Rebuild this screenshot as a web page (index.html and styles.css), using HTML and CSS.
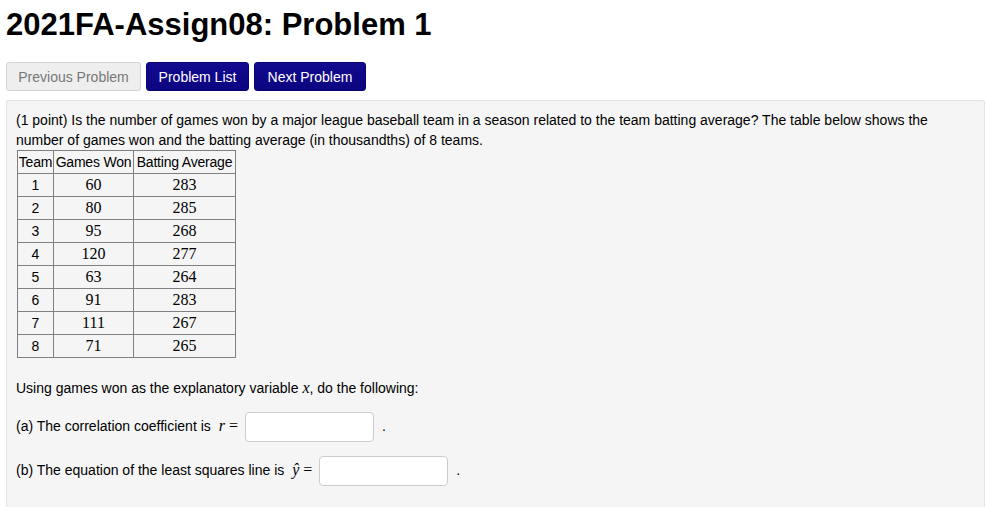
FILE: index.html
```html
<!DOCTYPE html>
<html>
<head>
<meta charset="utf-8">
<link rel="stylesheet" href="styles.css">
</head>
<body>
<h1 class="title">2021FA-Assign08: Problem 1</h1>
<div class="nav">
  <span class="btn btn-disabled">Previous Problem</span>
  <span class="btn btn-primary">Problem List</span>
  <span class="btn btn-primary">Next Problem</span>
</div>
<div class="problem">
  <p class="intro">(1 point) Is the number of games won by a major league baseball team in a season related to the team batting average? The table below shows the number of games won and the batting average (in thousandths) of 8 teams.</p>
  <table class="data">
    <tr class="head"><th class="c-team">Team</th><th class="c-won">Games Won</th><th class="c-avg">Batting Average</th></tr>
    <tr><td class="team">1</td><td>60</td><td>283</td></tr>
    <tr><td class="team">2</td><td>80</td><td>285</td></tr>
    <tr><td class="team">3</td><td>95</td><td>268</td></tr>
    <tr><td class="team">4</td><td>120</td><td>277</td></tr>
    <tr><td class="team">5</td><td>63</td><td>264</td></tr>
    <tr><td class="team">6</td><td>91</td><td>283</td></tr>
    <tr><td class="team">7</td><td>111</td><td>267</td></tr>
    <tr><td class="team">8</td><td>71</td><td>265</td></tr>
  </table>
  <p class="using">Using games won as the explanatory variable <span class="math">x</span>, do the following:</p>
  <div class="answer">(a) The correlation coefficient is <span class="math m-ans">r</span><span class="eq">=</span><span class="box box-a"></span><span class="dot">.</span></div>
  <div class="answer">(b) The equation of the least squares line is <span class="math m-ans">ŷ</span><span class="eq">=</span><span class="box box-b"></span><span class="dot">.</span></div>
</div>
</body>
</html>
```
FILE: styles.css
```css
html, body {
  margin: 0;
  padding: 0;
  background: #ffffff;
}
body {
  font-family: "Liberation Sans", Arial, Helvetica, sans-serif;
  color: #000;
  padding: 0 2px 0 6px;
  height: 507px;
  overflow: hidden;
}
.title {
  font-size: 31px;
  font-weight: bold;
  margin: 0;
  padding-top: 8px;
  height: 54px;
  line-height: 34px;
}
.nav {
  display: flex;
  gap: 5px;
  height: 29px;
}
.btn {
  display: flex;
  align-items: center;
  justify-content: center;
  box-sizing: border-box;
  height: 29px;
  font-size: 14px;
  border-radius: 3px;
  border: 1px solid;
}
.btn-disabled {
  width: 135px;
  background: #eeeeee;
  border-color: #d4d4d4;
  color: #777777;
}
.btn-primary {
  background: linear-gradient(#130a90, #0c0580);
  border-color: #0a0470;
  color: #ffffff;
}
.btn-primary:nth-child(2) { width: 103px; }
.btn-primary:nth-child(3) { width: 112px; }
.problem {
  margin-top: 9px;
  background: #f5f5f5;
  border: 1px solid #e3e3e3;
  border-bottom: none;
  border-radius: 3px 3px 0 0;
  padding: 9px 9px 0 9px;
  height: 420px;
  font-size: 14px;
}
.intro {
  margin: 0;
  line-height: 20px;
}
.data {
  border-collapse: collapse;
  table-layout: fixed;
  margin: 0 0 0 1px;
  background: #f5f5f5;
}
.data th, .data td {
  border: 1px solid #808080;
  padding: 0;
  text-align: center;
  white-space: nowrap;
}
.data th {
  font-weight: normal;
  font-size: 14px;
  height: 22px;
  letter-spacing: -0.2px;
}
.c-team { width: 35px; }
.c-won { width: 79px; }
.c-avg { width: 101px; }
.data td {
  font-family: "Liberation Serif", "Times New Roman", serif;
  font-size: 16px;
  height: 22px;
}
.data td.team {
  font-family: "Liberation Sans", Arial, sans-serif;
  font-size: 14px;
}
.using {
  margin: 20px 0 0 0;
  line-height: 20px;
}
.math {
  font-family: "Liberation Serif", "Times New Roman", serif;
  font-style: italic;
  font-size: 16px;
}
.m-ans {
  margin-left: 4px;
}
.eq {
  font-family: "Liberation Serif", "Times New Roman", serif;
  font-size: 16px;
  margin: 0 4px;
}
.answer {
  margin-top: 13px;
  height: 30px;
  line-height: 30px;
}
.answer + .answer {
  margin-top: 14px;
}
.box {
  display: inline-block;
  vertical-align: middle;
  box-sizing: border-box;
  width: 129px;
  height: 30px;
  background: #ffffff;
  border: 1px solid #cccccc;
  border-radius: 4px;
  margin-left: 3px;
}
.dot {
  margin-left: 8px;
}
```
